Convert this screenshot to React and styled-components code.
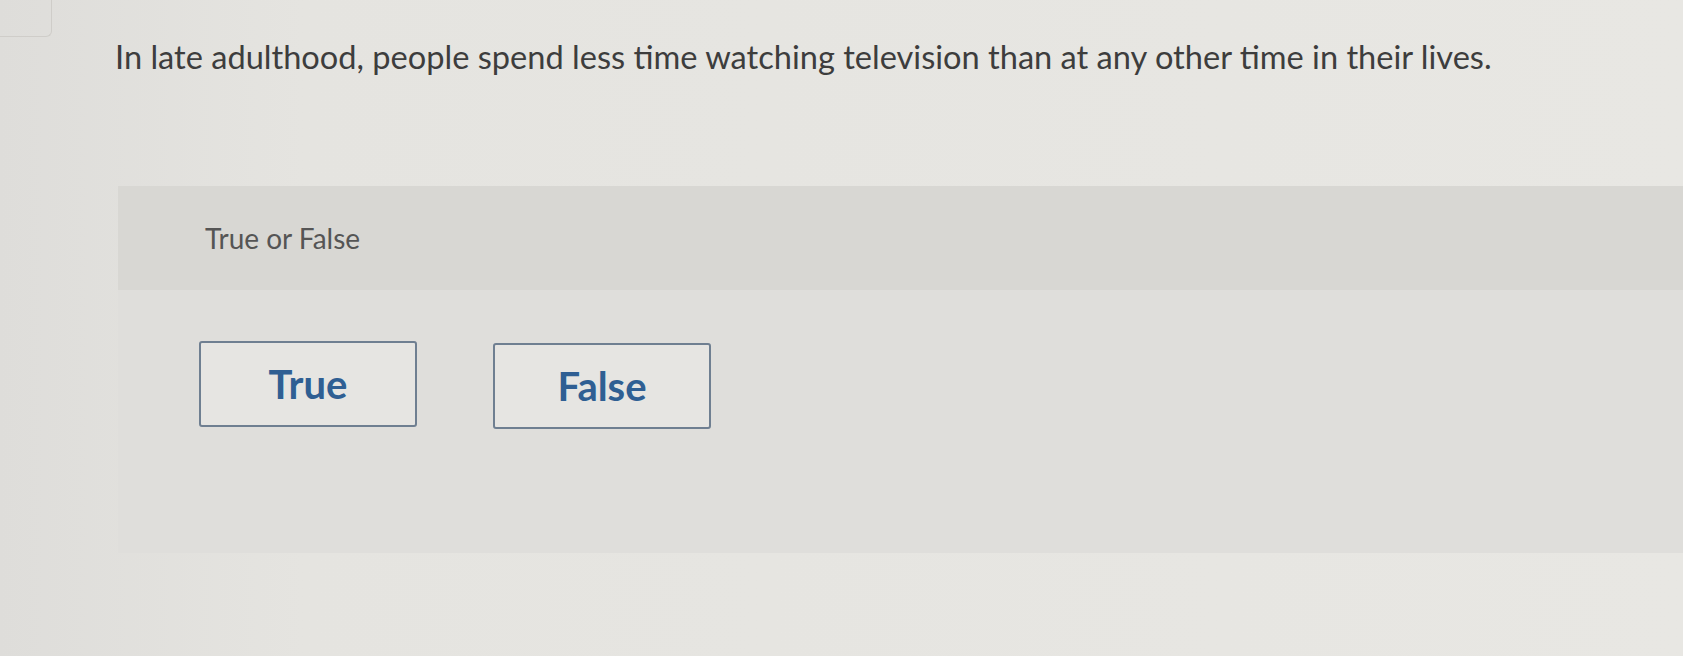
import React from 'react';
import styled, { createGlobalStyle } from 'styled-components';

const colors = {
  page: '#e5e4e0',
  header: '#d8d7d3',
  body: '#dfdedb',
  text: '#3d3d3d',
  muted: '#555555',
  blue: '#2f5f93',
  border: '#6f7f91',
  buttonBg: '#e6e5e2',
};

const GlobalStyle = createGlobalStyle`
  html, body {
    margin: 0;
    padding: 0;
    background: ${colors.page};
  }
  body {
    font-family: Lato, "Open Sans", "Liberation Sans", sans-serif;
    color: ${colors.text};
  }
`;

const Page = styled.div`
  width: 1683px;
  height: 656px;
  overflow: hidden;
  background: linear-gradient(90deg, #dedddA 0%, ${colors.page} 18%, #e8e7e3 100%);
`;

const CornerTab = styled.div`
  width: 52px;
  height: 37px;
  box-sizing: border-box;
  border-right: 1px solid #cfcdc9;
  border-bottom: 1px solid #cfcdc9;
  border-bottom-right-radius: 6px;
`;

const Question = styled.h1`
  margin: 4px 0 0;
  padding-left: 115px;
  font-size: 32.6px;
  font-weight: 400;
  line-height: 32px;
  color: ${colors.text};
  white-space: nowrap;
`;

const Panel = styled.section`
  margin: 113px 0 0 118px;
  width: 1600px;
`;

const PanelHeader = styled.div`
  height: 104px;
  box-sizing: border-box;
  padding-left: 87px;
  display: flex;
  align-items: center;
  background: ${colors.header};
  font-size: 28px;
  color: ${colors.muted};
`;

const PanelBody = styled.div`
  height: 263px;
  box-sizing: border-box;
  padding: 51px 0 0 81px;
  display: flex;
  align-items: flex-start;
  gap: 76px;
  background: ${colors.body};
`;

const Choice = styled.button`
  width: 218px;
  height: 86px;
  margin-top: ${(p) => p.$offset || 0}px;
  box-sizing: border-box;
  border: 2px solid ${colors.border};
  border-radius: 3px;
  background: ${colors.buttonBg};
  color: ${colors.blue};
  font-family: Lato, "Open Sans", "Liberation Sans", sans-serif;
  font-size: 40px;
  font-weight: 700;
  cursor: pointer;
`;

export default function App() {
  return (
    <Page>
      <GlobalStyle />
      <CornerTab />
      <Question>
        In late adulthood, people spend less time watching television than at any other time in their lives.
      </Question>
      <Panel>
        <PanelHeader>True or False</PanelHeader>
        <PanelBody>
          <Choice>True</Choice>
          <Choice $offset={2}>False</Choice>
        </PanelBody>
      </Panel>
    </Page>
  );
}
